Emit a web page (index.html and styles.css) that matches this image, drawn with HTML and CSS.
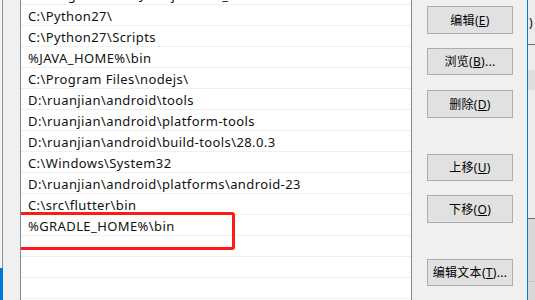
FILE: index.html
```html
<!DOCTYPE html>
<html lang="zh-CN">
<head>
    <meta charset="UTF-8">
    <title>编辑环境变量</title>
    <link rel="stylesheet" href="styles.css">
</head>
<body>
    <div class="dialog">
        <div class="edge">
            <div class="stripe">
                <div class="stripe-top"></div>
                <div class="stripe-active"></div>
            </div>
        </div>

        <div class="list">
            <div class="list-scroll">
                <div class="row">C:\Program Files\Java\jdk1.8.0_171\bin</div>
                <div class="row">C:\Python27\</div>
                <div class="row">C:\Python27\Scripts</div>
                <div class="row">%JAVA_HOME%\bin</div>
                <div class="row">C:\Program Files\nodejs\</div>
                <div class="row">D:\ruanjian\android\tools</div>
                <div class="row">D:\ruanjian\android\platform-tools</div>
                <div class="row">D:\ruanjian\android\build-tools\28.0.3</div>
                <div class="row">C:\Windows\System32</div>
                <div class="row">D:\ruanjian\android\platforms\android-23</div>
                <div class="row">C:\src\flutter\bin</div>
                <div class="row">%GRADLE_HOME%\bin</div>
                <div class="row"></div>
                <div class="row"></div>
                <div class="row"></div>
            </div>
            <!-- highlight drawn over the new entry -->
            <div class="highlight"></div>
        </div>

        <div class="actions">
            <button class="btn">编辑(<u>E</u>)</button>
            <button class="btn">浏览(<u>B</u>)...</button>
            <button class="btn btn-loose">删除(<u>D</u>)</button>
            <button class="btn btn-group">上移(<u>U</u>)</button>
            <button class="btn">下移(<u>O</u>)</button>
            <button class="btn btn-group">编辑文本(<u>T</u>)...</button>
        </div>

        <div class="behind">
            <div class="behind-top"><span class="paren">)</span></div>
            <div class="behind-mid">
                <div class="behind-band"></div>
            </div>
            <div class="behind-bottom">
                <div class="behind-line"></div>
            </div>
        </div>
    </div>
</body>
</html>
```

FILE: styles.css
```css
:root {
    --face: #f0f0f0;
    --frame: #828790;
    --row-line: #f0f0f0;
    --btn-bg: #e1e1e1;
    --btn-border: #adadad;
    --accent: #0078d7;
    --mark: #ff1a1a;
}

html, body {
    margin: 0;
    padding: 0;
}
body {
    font-family: "Noto Sans", "Noto Sans CJK SC", sans-serif;
    font-size: 12px;
    color: #000000;
    background-color: var(--face);
    overflow: hidden;
}
.dialog {
    display: flex;
    height: 300px;
    width: 535px;
}

/* left window edge */
.edge {
    width: 20px;
    display: flex;
    background-color: var(--face);
}
.stripe {
    width: 3px;
    display: flex;
    flex-direction: column;
}
.stripe-top {
    flex: 1;
    border-right: 1px solid #8a97a8;
    background-color: #f4f4f4;
}
.stripe-active {
    height: 32px;
    background-color: var(--accent);
}

/* path list */
.list {
    position: relative;
    width: 390px;
    background-color: #ffffff;
    border-left: 1px solid var(--frame);
    border-right: 1px solid var(--frame);
    overflow: hidden;
}
.list-scroll {
    margin-top: -16px;
}
.row {
    height: 17px;
    padding-top: 3px;
    line-height: 17px;
    padding-left: 7px;
    font-size: 13px;
    letter-spacing: 0.4px;
    color: #111111;
    border-bottom: 1px solid var(--row-line);
    white-space: nowrap;
}
.highlight {
    position: absolute;
    left: -10px;
    top: 212px;
    width: 218px;
    height: 32px;
    border: 3px solid var(--mark);
    border-radius: 3px;
}

/* button column */
.actions {
    width: 115px;
    display: flex;
    flex-direction: column;
    align-items: flex-start;
    padding-top: 6px;
    padding-left: 15px;
    box-sizing: border-box;
    background-color: var(--face);
}
.btn {
    width: 86px;
    height: 28px;
    margin-bottom: 14px;
    padding: 0;
    font-family: inherit;
    font-size: 12px;
    letter-spacing: 0.3px;
    color: #000000;
    background-color: var(--btn-bg);
    border: 1px solid var(--btn-border);
    border-radius: 0;
}
.btn-loose {
    margin-top: 1px;
}
.btn-group {
    margin-top: 22px;
}

/* neighbouring window peeking in */
.behind {
    flex: 1;
    display: flex;
    flex-direction: column;
    border-left: 1px solid var(--accent);
    background-color: #e6e6e6;
}
.behind-top {
    height: 44px;
    border-bottom: 1px solid #6d6d6d;
    background-color: #ececec;
}
.paren {
    display: block;
    padding-top: 17px;
    padding-left: 1px;
    line-height: 12px;
}
.behind-mid {
    height: 174px;
    padding-top: 25px;
    box-sizing: border-box;
    border-bottom: 1px solid #6d6d6d;
    background-color: #ececec;
}
.behind-band {
    height: 20px;
    background-color: #dedede;
}
.behind-bottom {
    flex: 1;
    padding-top: 62px;
    background-color: #d9d9d9;
}
.behind-line {
    height: 1px;
    background-color: #c4c4c4;
}
```
